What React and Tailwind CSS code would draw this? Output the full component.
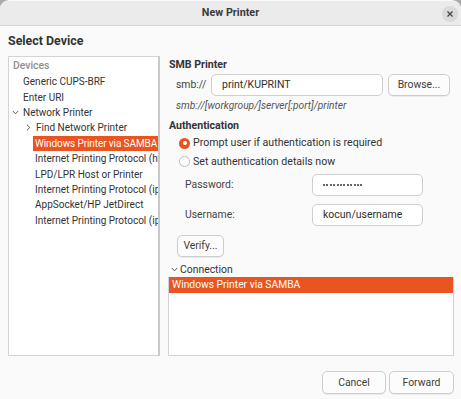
import React from "react";

const F = { fontFamily: "Roboto, 'Liberation Sans', sans-serif" };

function ChevronDown({ cls = "" }) {
  return (
    <svg width="7" height="5" viewBox="0 0 7 5" className={cls}>
      <path d="M0.8 1 L3.5 3.8 L6.2 1" fill="none" stroke="#555" strokeWidth="1" />
    </svg>
  );
}
function ChevronRight({ cls = "" }) {
  return (
    <svg width="5" height="7" viewBox="0 0 5 7" className={cls}>
      <path d="M1 0.8 L3.8 3.5 L1 6.2" fill="none" stroke="#555" strokeWidth="1" />
    </svg>
  );
}

function Btn({ children, cls = "" }) {
  return (
    <div
      className={
        "flex items-center justify-center rounded-[5px] border border-[#cdcdcd] bg-[#fcfcfc] text-[10.4px] text-[#3d3d3d] shadow-[0_1px_0_rgba(0,0,0,0.06)] " +
        cls
      }
    >
      {children}
    </div>
  );
}

function Input({ children, cls = "" }) {
  return (
    <div
      className={
        "flex items-center rounded-[5px] border border-[#cfcfcf] bg-white pl-[10px] text-[10.5px] text-[#2e2e2e] " +
        cls
      }
    >
      {children}
    </div>
  );
}

function Row({ children, cls = "" }) {
  return (
    <div className={"flex h-[15.4px] items-center overflow-hidden whitespace-nowrap text-[10px] text-[#333] " + cls}>
      {children}
    </div>
  );
}

export default function App() {
  return (
    <div style={F} className="h-[399px] w-[461px] overflow-hidden bg-[#a9a9a9]">
      <div className="flex h-full flex-col rounded-t-[9px] bg-[#fafafa] pt-[1px]">
        {/* title bar */}
        <div className="relative flex h-[25px] items-center justify-center rounded-t-[8px] border-b border-[#d6d6d6] bg-[#ebebeb]">
          <span className="text-[10.8px] font-bold text-[#3a3a3a]">New Printer</span>
          <div className="absolute right-[3px] top-[5px] flex h-[16px] w-[16px] items-center justify-center rounded-full bg-[#dadada]">
            <svg width="6" height="6" viewBox="0 0 6 6">
              <path d="M0.5 0.5 L5.5 5.5 M5.5 0.5 L0.5 5.5" stroke="#444" strokeWidth="1.3" />
            </svg>
          </div>
        </div>

        {/* heading */}
        <div className="flex h-[30px] items-center pl-[8px] pt-[1px] text-[12.4px] font-bold text-[#333]">
          Select Device
        </div>

        {/* main */}
        <div className="flex h-[300px] pl-[8px]">
          {/* left tree */}
          <div className="flex w-[152px] flex-col border border-r-2 border-[#d4d4d4] border-r-[#c9c9c9] bg-white">
            <div className="flex h-[17px] items-center pl-[4px] text-[10.4px] font-medium text-[#8f8f8f]">Devices</div>
            <Row cls="pl-[14px]">Generic CUPS-BRF</Row>
            <Row cls="pl-[14px]">Enter URI</Row>
            <Row cls="pl-[3px]">
              <ChevronDown cls="mr-[4px]" />
              Network Printer
            </Row>
            <Row cls="pl-[17px]">
              <ChevronRight cls="mr-[5px]" />
              Find Network Printer
            </Row>
            <Row cls="ml-[24px] bg-[#e95420] pl-[2px] tracking-[-0.1px] !text-white">Windows Printer via SAMBA</Row>
            <Row cls="pl-[26px]">Internet Printing Protocol (https)</Row>
            <Row cls="pl-[26px]">LPD/LPR Host or Printer</Row>
            <Row cls="pl-[26px]">Internet Printing Protocol (ipp)</Row>
            <Row cls="pl-[26px]">AppSocket/HP JetDirect</Row>
            <Row cls="pl-[26px]">Internet Printing Protocol (ipps)</Row>
          </div>

          {/* right pane */}
          <div className="ml-[8px] flex w-[286px] flex-col">
            <div className="flex h-[17px] items-center pl-[1px] text-[10.6px] font-bold text-[#333]">SMB Printer</div>
            <div className="mt-[1px] flex h-[22px] items-center pl-[8px]">
              <span className="w-[35px] text-[10.4px] text-[#444]">smb://</span>
              <Input cls="h-[22px] w-[172px]">print/KUPRINT</Input>
              <Btn cls="ml-[5px] h-[22px] w-[62px]">Browse...</Btn>
            </div>
            <div className="flex h-[19px] items-center pl-[8px] text-[10.2px] italic text-[#555]">
              smb://[workgroup/]server[:port]/printer
            </div>
            <div className="flex h-[19px] items-center pl-[1px] pt-[2px] text-[10.6px] font-bold text-[#333]">
              Authentication
            </div>
            <div className="flex h-[18px] items-center pl-[11px] text-[10.6px] text-[#333]">
              <div className="mr-[3px] flex h-[11px] w-[11px] items-center justify-center rounded-full bg-[#e95420]">
                <div className="h-[4px] w-[4px] rounded-full bg-white" />
              </div>
              Prompt user if authentication is required
            </div>
            <div className="flex h-[19px] items-center pl-[11px] text-[10.6px] text-[#333]">
              <div className="mr-[3px] h-[11px] w-[11px] rounded-full border border-[#bdbdbd] bg-white" />
              Set authentication details now
            </div>
            <div className="mt-[3px] flex h-[22px] items-center pl-[17px]">
              <span className="w-[127px] text-[10.4px] text-[#444]">Password:</span>
              <Input cls="h-[22px] w-[111px] gap-[1.4px]">
                {Array.from({ length: 12 }).map((_, i) => (
                  <span key={i} className="h-[2px] w-[2px] rounded-full bg-[#333]" />
                ))}
              </Input>
            </div>
            <div className="mt-[8px] flex h-[22px] items-center pl-[17px]">
              <span className="w-[127px] text-[10.4px] text-[#444]">Username:</span>
              <Input cls="h-[22px] w-[111px]">kocun/username</Input>
            </div>
            <div className="mt-[9px] flex pl-[9px]">
              <Btn cls="h-[22px] w-[47px]">Verify...</Btn>
            </div>
            <div className="mt-[4px] flex h-[16px] items-center pl-[3px] pt-[1px] text-[10.4px] text-[#333]">
              <ChevronDown cls="mr-[2px]" />
              Connection
            </div>
            <div className="flex flex-1 flex-col border border-t-0 border-[#d4d4d4] bg-white">
              <div className="flex h-[16px] items-center bg-[#e95420] pl-[3px] text-[10.3px] text-white">
                Windows Printer via SAMBA
              </div>
            </div>
          </div>
        </div>

        {/* footer */}
        <div className="mt-[15px] flex justify-end gap-[3px] pr-[7px]">
          <Btn cls="h-[23px] w-[64px]">Cancel</Btn>
          <Btn cls="h-[23px] w-[65px]">Forward</Btn>
        </div>
      </div>
    </div>
  );
}
